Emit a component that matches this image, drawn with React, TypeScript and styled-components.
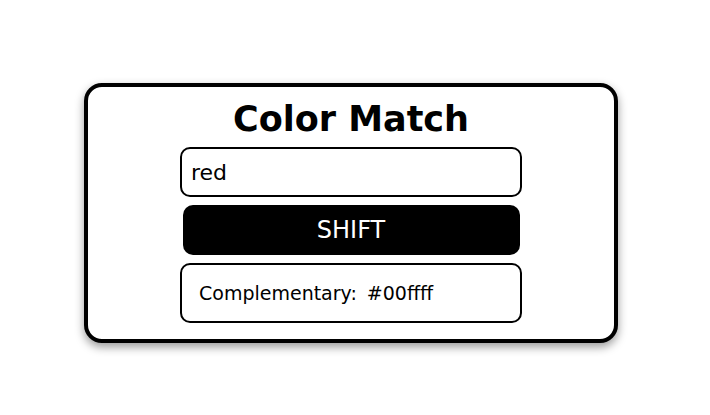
import React, {useState} from 'react';
import styled, {createGlobalStyle} from 'styled-components';

const GlobalStyle = createGlobalStyle`
  body {
    margin: 0;
    background: white;
    font-family: "DejaVu Sans", Verdana, sans-serif;
  }
`;

const Page = styled.div`
  min-height: 100vh;
  box-sizing: border-box;
  display: flex;
  align-items: center;
  justify-content: center;
  padding: 11px 8px 0 0;
`;

const Card = styled.div`
  width: 534px;
  height: 260px;
  box-sizing: border-box;
  border: 4px solid black;
  border-radius: 18px;
  background: white;
  box-shadow: 0 4px 10px rgba(0, 0, 0, 0.4);
  display: flex;
  flex-direction: column;
  align-items: center;
  padding-top: 10px;
`;

const Title = styled.h1`
  margin: 0 0 6px;
  font-size: 35px;
  line-height: 44px;
  font-weight: bold;
  color: black;
`;

const ColorInput = styled.input`
  width: 342px;
  height: 50px;
  box-sizing: border-box;
  border: 2px solid black;
  border-radius: 10px;
  padding: 0 9px;
  font-family: inherit;
  font-size: 22px;
  color: black;
  outline: none;
`;

const ShiftButton = styled.button`
  width: 337px;
  height: 50px;
  margin-top: 8px;
  border: none;
  border-radius: 10px;
  background: black;
  color: white;
  font-family: inherit;
  font-size: 24px;
  cursor: pointer;
`;

const Result = styled.div`
  width: 342px;
  height: 60px;
  margin-top: 8px;
  box-sizing: border-box;
  border: 2px solid black;
  border-radius: 10px;
  display: flex;
  align-items: center;
  padding: 0 17px;
  font-size: 19px;
  color: black;
  gap: 10px;
`;

function App() {
  const [value, setValue] = useState('red');
  return (
    <Page>
      <GlobalStyle/>
      <Card>
        <Title>Color Match</Title>
        <ColorInput value={value} onChange={e => setValue(e.target.value)}/>
        <ShiftButton>SHIFT</ShiftButton>
        <Result>
          <span>Complementary:</span>
          <span>#00ffff</span>
        </Result>
      </Card>
    </Page>
  );
}

export default App;
